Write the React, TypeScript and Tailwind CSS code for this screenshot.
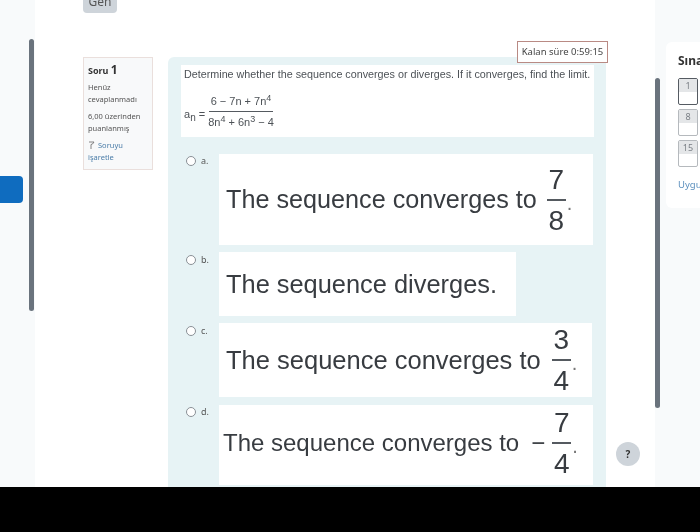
import React from 'react';

const sans = "font-['Noto_Sans','Open_Sans',sans-serif]";
const arial = "font-['Liberation_Sans',Arial,sans-serif]";

const Frac = ({ top, bottom, ml }: { top: string; bottom: string; ml: string }) => (
  <span className={`inline-flex flex-col items-center w-[19px] h-[70px] justify-center shrink-0 ${ml}`}>
    <span className="leading-[37px] text-[28px]">{top}</span>
    <span className="h-[2px] w-full shrink-0 bg-[#555a60] my-[1px]" />
    <span className="leading-[37px] text-[28px]">{bottom}</span>
  </span>
);

const Dot = () => <span className="text-[20px] text-[#777] ml-px self-center mt-[6px]">.</span>;

const Radio = ({ label, off = '' }: { label: string; off?: string }) => (
  <div className={`w-[38px] shrink-0 flex items-center gap-[5px] pl-[5px] h-[14px] text-[9px] text-[#555] ${off} ${sans}`}>
    <span className="w-[10px] h-[10px] rounded-full border border-[#8a9096] bg-white shrink-0" />
    {label}
  </div>
);

const Answer = ({ label, box, off, children }: { label: string; box: string; off?: string; children: React.ReactNode }) => (
  <div className="flex items-start">
    <Radio label={label} off={off} />
    <div className={`bg-white flex items-center whitespace-nowrap text-[#383c41] ${arial} ${box}`}>{children}</div>
  </div>
);

const NavBtn = ({ n, active, h }: { n: string; active?: boolean; h: string }) => (
  <div className={`w-[20px] ${h} rounded-[2px] border bg-white overflow-hidden ${active ? 'border-[#555b62] border-[1.5px]' : 'border-[#b5b9bd]'}`}>
    <div className={`h-[13px] bg-[#e4e6e8] text-[9px] leading-[13px] text-center text-[#7a7f85] ${sans}`}>{n}</div>
  </div>
);

const App: React.FC = () => {
  return (
    <div className="w-[700px] h-[532px] overflow-hidden flex flex-col bg-black">
      <div className="h-[487px] flex shrink-0 overflow-hidden relative blur-[0.4px]">
        {/* left drawer */}
        <div className="w-[35px] bg-[#f8fafb] shrink-0 relative">
          <div className="absolute left-0 top-[176px] w-[23px] h-[27px] bg-[#0f6cbf] rounded-r-[4px]" />
          <div className="absolute left-[29px] top-[39px] w-[5px] h-[272px] bg-[#6a737d] rounded-full" />
        </div>

        {/* main */}
        <div className="w-[620px] shrink-0 bg-white relative pl-[48px]">
          <div className={`w-[34px] h-[26px] -mt-[13px] rounded-[4px] bg-[#ced4da] text-center text-[12px] leading-[30px] text-[#555] ${sans}`}>Gen</div>
          <div className="absolute left-[482px] top-[41px] w-[91px] h-[22px] z-10 bg-white border border-[#b98a84] flex items-center justify-center">
            <span className={`text-[9.5px] text-[#444] ${sans}`}>Kalan süre 0:59:15</span>
          </div>

          <div className="flex mt-[44px] gap-[15px]">
            {/* info */}
            <div className={`w-[70px] h-[113px] shrink-0 bg-[#f8f9fa] border border-[#eadfdc] pl-[4px] pt-[5px] ${sans}`}>
              <div className="text-[9px] font-bold text-[#333] leading-[14px]">Soru <span className="text-[12px]">1</span></div>
              <div className="text-[7.5px] leading-[12px] text-[#555] mt-[3px]">Henüz<br />cevaplanmadı</div>
              <div className="text-[7.5px] leading-[12px] text-[#555] mt-[5px]">6,00 üzerinden<br />puanlanmış</div>
              <div className="text-[7.5px] leading-[12px] text-[#4b7da8] mt-[5px]">
                <svg className="inline-block mr-[3px] -mt-[2px]" width="7" height="8" viewBox="0 0 7 8" fill="none" stroke="#666" strokeWidth="0.8">
                  <path d="M1 1h5L4.5 3 3 3.5V8" />
                </svg>
                Soruyu<br />işaretle
              </div>
            </div>

            {/* content */}
            <div className="w-[438px] h-[440px] shrink-0 bg-[#e7f3f5] rounded-tl-[6px] pl-[13px] pr-[12px] pt-[8px]">
              <div className={`bg-white h-[72px] pl-[3px] pt-[2px] text-[#4d5257] ${arial}`}>
                <div className="text-[10.75px] leading-[14px] whitespace-nowrap">Determine whether the sequence converges or diverges. If it converges, find the limit.</div>
                <div className="flex items-center mt-[11px] text-[11px]">
                  <span className="w-[25px] whitespace-nowrap pt-[5px]">a<sub className="text-[10px]">n</sub> =</span>
                  <span className="inline-flex flex-col items-center w-[64px]">
                    <span className="leading-[19px] whitespace-nowrap">6 − 7n + 7n<sup className="text-[9px] relative -top-[4px]">4</sup></span>
                    <span className="h-px w-full bg-[#555a60]" />
                    <span className="leading-[20px] whitespace-nowrap">8n<sup className="text-[9px] relative -top-[4px]">4</sup> + 6n<sup className="text-[9px] relative -top-[4px]">3</sup> − 4</span>
                  </span>
                </div>
              </div>

              <div className="flex flex-col mt-[17px]">
                <Answer label="a." box="w-[374px] h-[91px] pl-[7px] text-[25.2px]">
                  The sequence converges to<Frac top="7" bottom="8" ml="ml-[10px]" /><Dot />
                </Answer>
                <div className="mt-[7px]">
                  <Answer label="b." off="mt-[1px]" box="w-[297px] h-[64px] pl-[7px] text-[25.4px]">The sequence diverges.</Answer>
                </div>
                <div className="mt-[7px]">
                  <Answer label="c." off="mt-[1px]" box="w-[373px] h-[74px] pl-[7px] text-[25.5px]">
                    The sequence converges to<Frac top="3" bottom="4" ml="ml-[11px]" /><Dot />
                  </Answer>
                </div>
                <div className="mt-[8px]">
                  <Answer label="d." box="w-[374px] h-[80px] pl-[4px] pb-[4px] text-[24px]">
                    The sequence converges to<span className="ml-[12px]">−</span><Frac top="7" bottom="4" ml="ml-[7px]" /><Dot />
                  </Answer>
                </div>
              </div>
            </div>
          </div>

          <div className={`absolute left-[581px] top-[442px] w-[24px] h-[24px] rounded-full bg-[#ced4da] flex items-center justify-center text-[10px] font-bold text-[#333] ${sans}`}>?</div>
        </div>

        {/* right drawer */}
        <div className="flex-1 bg-[#f8fafb] relative pl-[11px] pt-[42px]">
          <div className="absolute left-0 top-[78px] w-[5px] h-[330px] bg-[#6a737d] rounded-full" />
          <div className={`bg-white rounded-l-[6px] h-[166px] pl-[12px] pt-[10px] overflow-hidden ${sans}`}>
            <div className="text-[12px] font-bold text-[#333] leading-[18px] whitespace-nowrap">Sınav</div>
            <div className="flex flex-col gap-[4px] mt-[8px]">
              <NavBtn n="1" active h="h-[27px]" />
              <NavBtn n="8" h="h-[27px]" />
              <NavBtn n="15" h="h-[27px]" />
            </div>
            <div className="text-[9.5px] text-[#5b8fbd] mt-[11px] whitespace-nowrap">Uygula</div>
          </div>
        </div>
      </div>
    </div>
  );
};

export default App;
